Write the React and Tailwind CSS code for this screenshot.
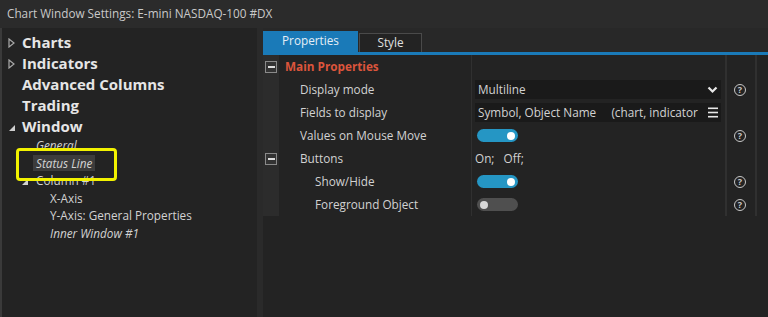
import React from "react";

const font = { fontFamily: '"Open Sans", "DejaVu Sans", sans-serif' };

function ClosedArrow() {
  return (
    <svg width="7" height="10" viewBox="0 0 7 10" className="ml-[6px] mr-[7px]">
      <path d="M1 1 L6 5 L1 9 Z" fill="none" stroke="#a8a8a8" strokeWidth="1.2" />
    </svg>
  );
}

function OpenArrow({ className }) {
  return (
    <svg width="6" height="6" viewBox="0 0 6 6" className={className}>
      <path d="M6 0 L6 6 L0 6 Z" fill="#cfcfcf" />
    </svg>
  );
}

function MinusBox() {
  return (
    <div className="w-[12px] h-[12px] border border-[#8a8a8a] bg-[#333] flex items-center justify-center">
      <div className="w-[7px] h-[2px] bg-[#dcdcdc]" />
    </div>
  );
}

function Help() {
  return (
    <div className="w-[12px] h-[12px] rounded-full border-[1.5px] border-[#c8c8c8] flex items-center justify-center text-[9px] font-bold text-[#c8c8c8] leading-none">
      ?
    </div>
  );
}

function Toggle({ on }) {
  return (
    <div
      className={
        on
          ? "w-[41px] h-[13px] rounded-full bg-[#2596c4] flex items-center justify-end pr-[3px]"
          : "w-[41px] h-[13px] rounded-full bg-[#4f4f4f] flex items-center justify-start pl-[3px]"
      }
    >
      <div className={on ? "w-[8px] h-[8px] rounded-full bg-white" : "w-[8px] h-[8px] rounded-full bg-[#d8d8d8]"} />
    </div>
  );
}

function Row({ gutter, label, labelClass, value, help }) {
  return (
    <div className="flex h-[23px]">
      <div className="w-[16px] bg-[#2c2c2c] flex items-center justify-center">{gutter && <MinusBox />}</div>
      <div className={"w-[193px] border-r border-[#303030] flex items-center " + labelClass}>{label}</div>
      <div className="w-[255px] border-r-2 border-[#303030] flex items-center pl-[3px]">{value}</div>
      <div className="w-[30px] border-r-2 border-[#303030] flex items-center justify-center pr-[2px]">
        {help && <Help />}
      </div>
      <div className="flex-1" />
    </div>
  );
}

export default function App() {
  return (
    <div className="w-[768px] h-[317px] bg-[#232323] flex flex-col overflow-hidden text-[#d2d2d2]" style={font}>
      <div className="h-[28px] bg-[#2b2b2b] flex items-center pl-[7px] text-[11.75px] text-[#c9c9c9]">
        Chart Window Settings: E-mini NASDAQ-100 #DX
      </div>
      <div className="flex flex-1 border-l-2 border-[#3a3a3a]">
        {/* tree */}
        <div className="relative w-[255px] pt-[4px]">
          {["Charts", "Indicators", "Advanced Columns", "Trading"].map((t, i) => (
            <div key={t} className="h-[21px] flex items-center text-[15px] font-bold text-[#e6e6e6]">
              {i < 2 ? <ClosedArrow /> : <span className="w-[20px]" />}
              {t}
            </div>
          ))}
          <div className="h-[21px] flex items-center text-[15px] font-bold text-[#e6e6e6]">
            <OpenArrow className="ml-[7px] mr-[7px] mt-[3px]" />
            Window
          </div>
          <div className="text-[11.75px]">
            <div className="h-[17.6px] flex items-center pl-[34px] italic text-[#cfcfcf]">General</div>
            <div className="h-[17.6px] flex items-center pl-[31px]">
              <span className="bg-[#3c3c3c] italic px-[3px] h-[16px] flex items-center text-[#d4d4d4]">Status Line</span>
            </div>
            <div className="h-[17.6px] flex items-center pl-[20px]">
              <OpenArrow className="mr-[8px] mt-[2px]" />
              Column #1
            </div>
            <div className="h-[17.6px] flex items-center pl-[48px]">X-Axis</div>
            <div className="h-[17.6px] flex items-center pl-[48px]">Y-Axis: General Properties</div>
            <div className="h-[17.6px] flex items-center pl-[48px] italic">Inner Window #1</div>
          </div>
          {/* annotation box */}
          <div className="absolute left-[14px] top-[120px] w-[101px] h-[33px] border-[3px] border-[#f2f200] rounded-[4px]" />
        </div>
        <div className="w-[6px] bg-[#2a2a2a]" />
        {/* properties */}
        <div className="flex-1 flex flex-col">
          <div className="h-[24px] bg-[#282828] flex items-end">
            <div className="w-[95px] h-[21px] bg-[#1a7ab8] flex items-center justify-center text-[11.75px] text-[#e4eef6] pb-[1px]">
              Properties
            </div>
            <div className="w-[63px] h-[19px] ml-[1px] bg-[#232323] border border-b-0 border-[#4a4a4a] flex items-center justify-center text-[11.75px] text-[#e0e0e0]">
              Style
            </div>
          </div>
          <div className="h-[3px] bg-[#1a7ab8]" />
          <div className="text-[11.75px]">
            <Row gutter label="Main Properties" labelClass="pl-[6px] font-bold text-[#dc553c]" />
            <Row
              label="Display mode"
              labelClass="pl-[21px]"
              help
              value={
                <div className="w-[246px] h-[19px] bg-[#1a1a1a] flex items-center justify-between pl-[3px] pr-[3px]">
                  <span>Multiline</span>
                  <svg width="11" height="8" viewBox="0 0 11 8">
                    <path d="M1.5 1.5 L5.5 5.5 L9.5 1.5" fill="none" stroke="#e8e8e8" strokeWidth="2.2" />
                  </svg>
                </div>
              }
            />
            <Row
              label="Fields to display"
              labelClass="pl-[21px]"
              value={
                <div className="w-[246px] h-[19px] bg-[#1a1a1a] flex items-center justify-between pl-[3px] pr-[3px]">
                  <span className="whitespace-pre">Symbol, Object Name     (chart, indicator</span>
                  <svg width="10" height="11" viewBox="0 0 10 11">
                    <rect x="0" y="0.5" width="10" height="1.6" fill="#e8e8e8" />
                    <rect x="0" y="4.7" width="10" height="1.6" fill="#e8e8e8" />
                    <rect x="0" y="8.9" width="10" height="1.6" fill="#e8e8e8" />
                  </svg>
                </div>
              }
            />
            <Row label="Values on Mouse Move" labelClass="pl-[21px]" help value={<div className="pl-[2px]"><Toggle on /></div>} />
            <Row gutter label="Buttons" labelClass="pl-[21px]" value={<span className="whitespace-pre">On;   Off;</span>} />
            <Row label="Show/Hide" labelClass="pl-[36px]" help value={<div className="pl-[2px]"><Toggle on /></div>} />
            <Row label="Foreground Object" labelClass="pl-[36px]" help value={<div className="pl-[2px]"><Toggle /></div>} />
          </div>
        </div>
      </div>
    </div>
  );
}
